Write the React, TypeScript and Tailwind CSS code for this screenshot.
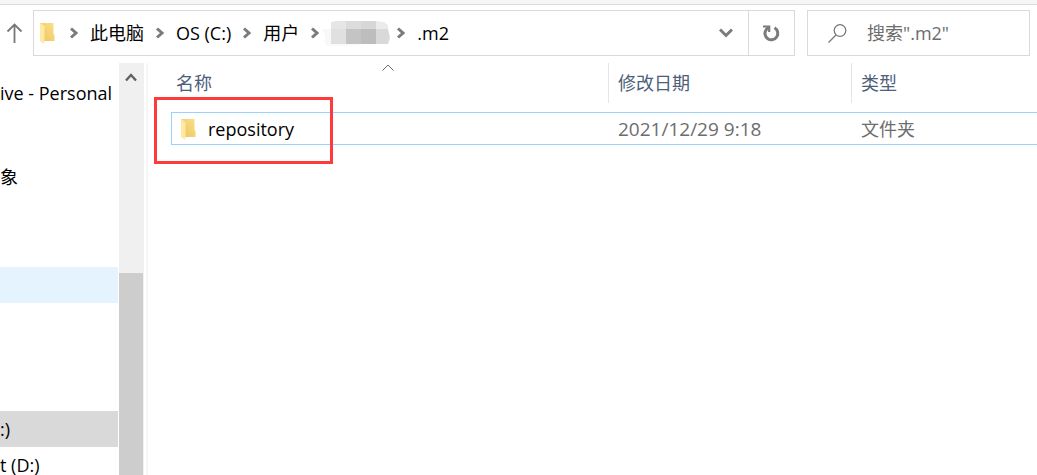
import React from "react";

const places = [
    { text: "", className: "bg-white" },
    { text: "象", className: "bg-white" },
    { text: "", className: "bg-white" },
    { text: "", className: "bg-white" },
    { text: "", className: "bg-[#e5f3ff]" },
    { text: "", className: "bg-white" },
    { text: "", className: "bg-white" },
    { text: "", className: "bg-white" },
    { text: ":)", className: "bg-[#d9d9d9]" },
    { text: "t (D:)", className: "bg-white" }
];

const files = [
    { name: "repository", date: "2021/12/29 9:18", type: "文件夹" }
];

function FolderIcon() {
    return (
        <svg width="15" height="22" viewBox="0 0 15 22" className="shrink-0" aria-hidden="true">
            <defs>
                <linearGradient id="folderBack" x1="0" y1="1" x2="1" y2="0">
                    <stop offset="0" stopColor="#edc45c" />
                    <stop offset="1" stopColor="#fbdf8c" />
                </linearGradient>
            </defs>
            <path d="M0 1H13.5V12L14.5 13V19H4L0 18Z" fill="url(#folderBack)" />
            <path d="M0 1L4.5 4V18.5L4 22L0 19Z" fill="#ffe7a4" />
        </svg>
    );
}

function Crumb({ children }: { children: React.ReactNode }) {
    return (
        <li className="flex items-center gap-3">
            <svg width="8" height="12" viewBox="0 0 8 12" fill="none" stroke="#7b7b7b" strokeWidth="3" aria-hidden="true">
                <path d="M1 1.5L6 6L1 10.5" />
            </svg>
            {children}
        </li>
    );
}

export default function App() {
    return (
        <div className="flex flex-col h-screen overflow-hidden bg-white text-black text-lg leading-5 font-['Open_Sans','Noto_Sans_CJK_SC',sans-serif]">
            <div className="h-[5px] shrink-0 bg-[#f5f6f7] border-b border-[#dadbdc]" />

            <header className="flex shrink-0 items-center pt-[5px] pr-[7px] pl-[6px]">
                <button type="button" aria-label="上移" className="w-[27px] shrink-0">
                    <svg width="17" height="20" viewBox="0 0 17 20" fill="none" stroke="#777777" strokeWidth="1.8">
                        <path d="M8.5 20V1.5M1.5 8.5L8.5 1.5L15.5 8.5" />
                    </svg>
                </button>
                <div className="flex flex-1 h-[46px] border border-[#d9d9d9]">
                    <nav className="flex flex-1 items-center gap-[15px] pl-1.5">
                        <FolderIcon />
                        <ol className="flex items-center gap-3">
                            <Crumb><a href="#pc">此电脑</a></Crumb>
                            <Crumb><a href="#c">OS (C:)</a></Crumb>
                            <Crumb><a href="#users">用户</a></Crumb>
                            <Crumb>
                                {/* hidden user name */}
                                <svg width="54" height="24" viewBox="0 0 54 24" className="overflow-visible" aria-hidden="true">
                                    <path d="M-8 8H0V25H-4L-6 22V13L-8 11Z" fill="#f8f8f8" />
                                    <path d="M0 23H32L26 25H0Z" fill="#fafafa" />
                                    <path d="M0 1L5 0H15V8H0Z" fill="#e6e6e6" />
                                    <path d="M15 0H30V8H15Z" fill="#dcdcdc" />
                                    <path d="M30 0H45V8H30Z" fill="#d7d7d7" />
                                    <path d="M45 0L53 1L57 4V8H45Z" fill="#ebebeb" />
                                    <path d="M0 8H15V23H0Z" fill="#e0e0e0" />
                                    <path d="M15 8H30V23H15Z" fill="#c4c4c4" />
                                    <path d="M30 8H45V23H30Z" fill="#bdbdbd" />
                                    <path d="M45 8H57L59 17L57 23H45Z" fill="#d9d9d9" />
                                </svg>
                            </Crumb>
                            <Crumb><a href="#m2">.m2</a></Crumb>
                        </ol>
                    </nav>
                    <button type="button" aria-label="历史记录" className="flex w-11 items-center justify-center">
                        <svg width="14" height="10" viewBox="0 0 14 10" fill="none" stroke="#7b7b7b" strokeWidth="3">
                            <path d="M1 1.5L7 7.5L13 1.5" />
                        </svg>
                    </button>
                    <button type="button" aria-label="刷新" className="flex w-[46px] items-center justify-center border-l border-[#d9d9d9]">
                        <svg width="17" height="17" viewBox="0 0 17 17" fill="none" stroke="#7b7b7b" strokeWidth="3">
                            <path d="M11.5 2.8A6.4 6.4 0 1 1 3.2 4.6L5.5 2.8" />
                            <path d="M0 1.5H6.2V7" strokeWidth="2.2" />
                        </svg>
                    </button>
                </div>
                <label className="flex w-[223px] h-[46px] items-center gap-5 ml-3 pl-5 border border-[#d9d9d9]">
                    <svg width="19" height="19" viewBox="0 0 19 19" fill="none" stroke="#777777" strokeWidth="1.3" className="shrink-0" aria-hidden="true">
                        <circle cx="12" cy="6.5" r="5.8" />
                        <path d="M8 11L0.5 18.5" />
                    </svg>
                    <input type="text" aria-label="搜索" placeholder={'搜索".m2"'} className="min-w-0 flex-1 outline-none placeholder:text-[#6d6d6d]" />
                </label>
            </header>

            <div className="flex flex-1 min-h-0 pt-[7px]">
                <aside className="flex w-[144px] shrink-0 overflow-hidden">
                    <ul className="flex-1 mr-px pt-3">
                        <li className="flex h-9 items-center mb-3 whitespace-nowrap">ive - Personal</li>
                        {places.map((place, index) => (
                            <li key={index} className={`flex h-9 items-center whitespace-nowrap ${place.className}`}>{place.text}</li>
                        ))}
                    </ul>
                    <div className="flex flex-col w-[25px] bg-[#f0f0f0] pr-px">
                        <button type="button" aria-label="向上滚动" className="flex h-[210px] shrink-0 justify-center pt-[9px]">
                            <svg width="12" height="10" viewBox="0 0 12 10" fill="none" stroke="#606060" strokeWidth="2.4">
                                <path d="M1 8.5L6 3L11 8.5" />
                            </svg>
                        </button>
                        <div className="flex-1 bg-[#cdcdcd]" />
                    </div>
                </aside>

                <main className="relative flex-1 min-w-0 ml-0.5 pl-[23px] border-l-2 border-[#f6f6f6]">
                    <svg width="12" height="7" viewBox="0 0 12 7" fill="none" stroke="#6d6d6d" className="absolute top-px left-[234px]" aria-hidden="true">
                        <path d="M0.5 6.5L6 1L11.5 6.5" />
                    </svg>
                    <table className="w-full table-fixed border-separate border-spacing-0 text-left">
                        <thead className="text-[#4c607a]">
                            <tr className="h-10">
                                <th className="w-[438px] pl-[5px] font-normal border-r border-[#e5e5e5]">名称</th>
                                <th className="w-[243px] pl-[9px] font-normal border-r border-[#e5e5e5]">修改日期</th>
                                <th className="pl-[9px] font-normal">类型</th>
                            </tr>
                            <tr className="h-[9px]" />
                        </thead>
                        <tbody className="text-[#6d6d6d]">
                            {files.map((file) => (
                                <tr key={file.name} className="h-[33px]">
                                    <td className="pl-[9px] border-y border-l border-[#99d1ff] text-black">
                                        <div className="flex items-center gap-3">
                                            <FolderIcon />
                                            {file.name}
                                        </div>
                                    </td>
                                    <td className="pl-[9px] border-y border-[#99d1ff] text-[19px] leading-5">{file.date}</td>
                                    <td className="pl-[9px] border-y border-[#99d1ff]">{file.type}</td>
                                </tr>
                            ))}
                        </tbody>
                    </table>
                    <div className="absolute top-[34px] left-[6px] w-[179px] h-[67px] border-3 border-[#ff3a3a]" />
                </main>
            </div>
        </div>
    );
}
